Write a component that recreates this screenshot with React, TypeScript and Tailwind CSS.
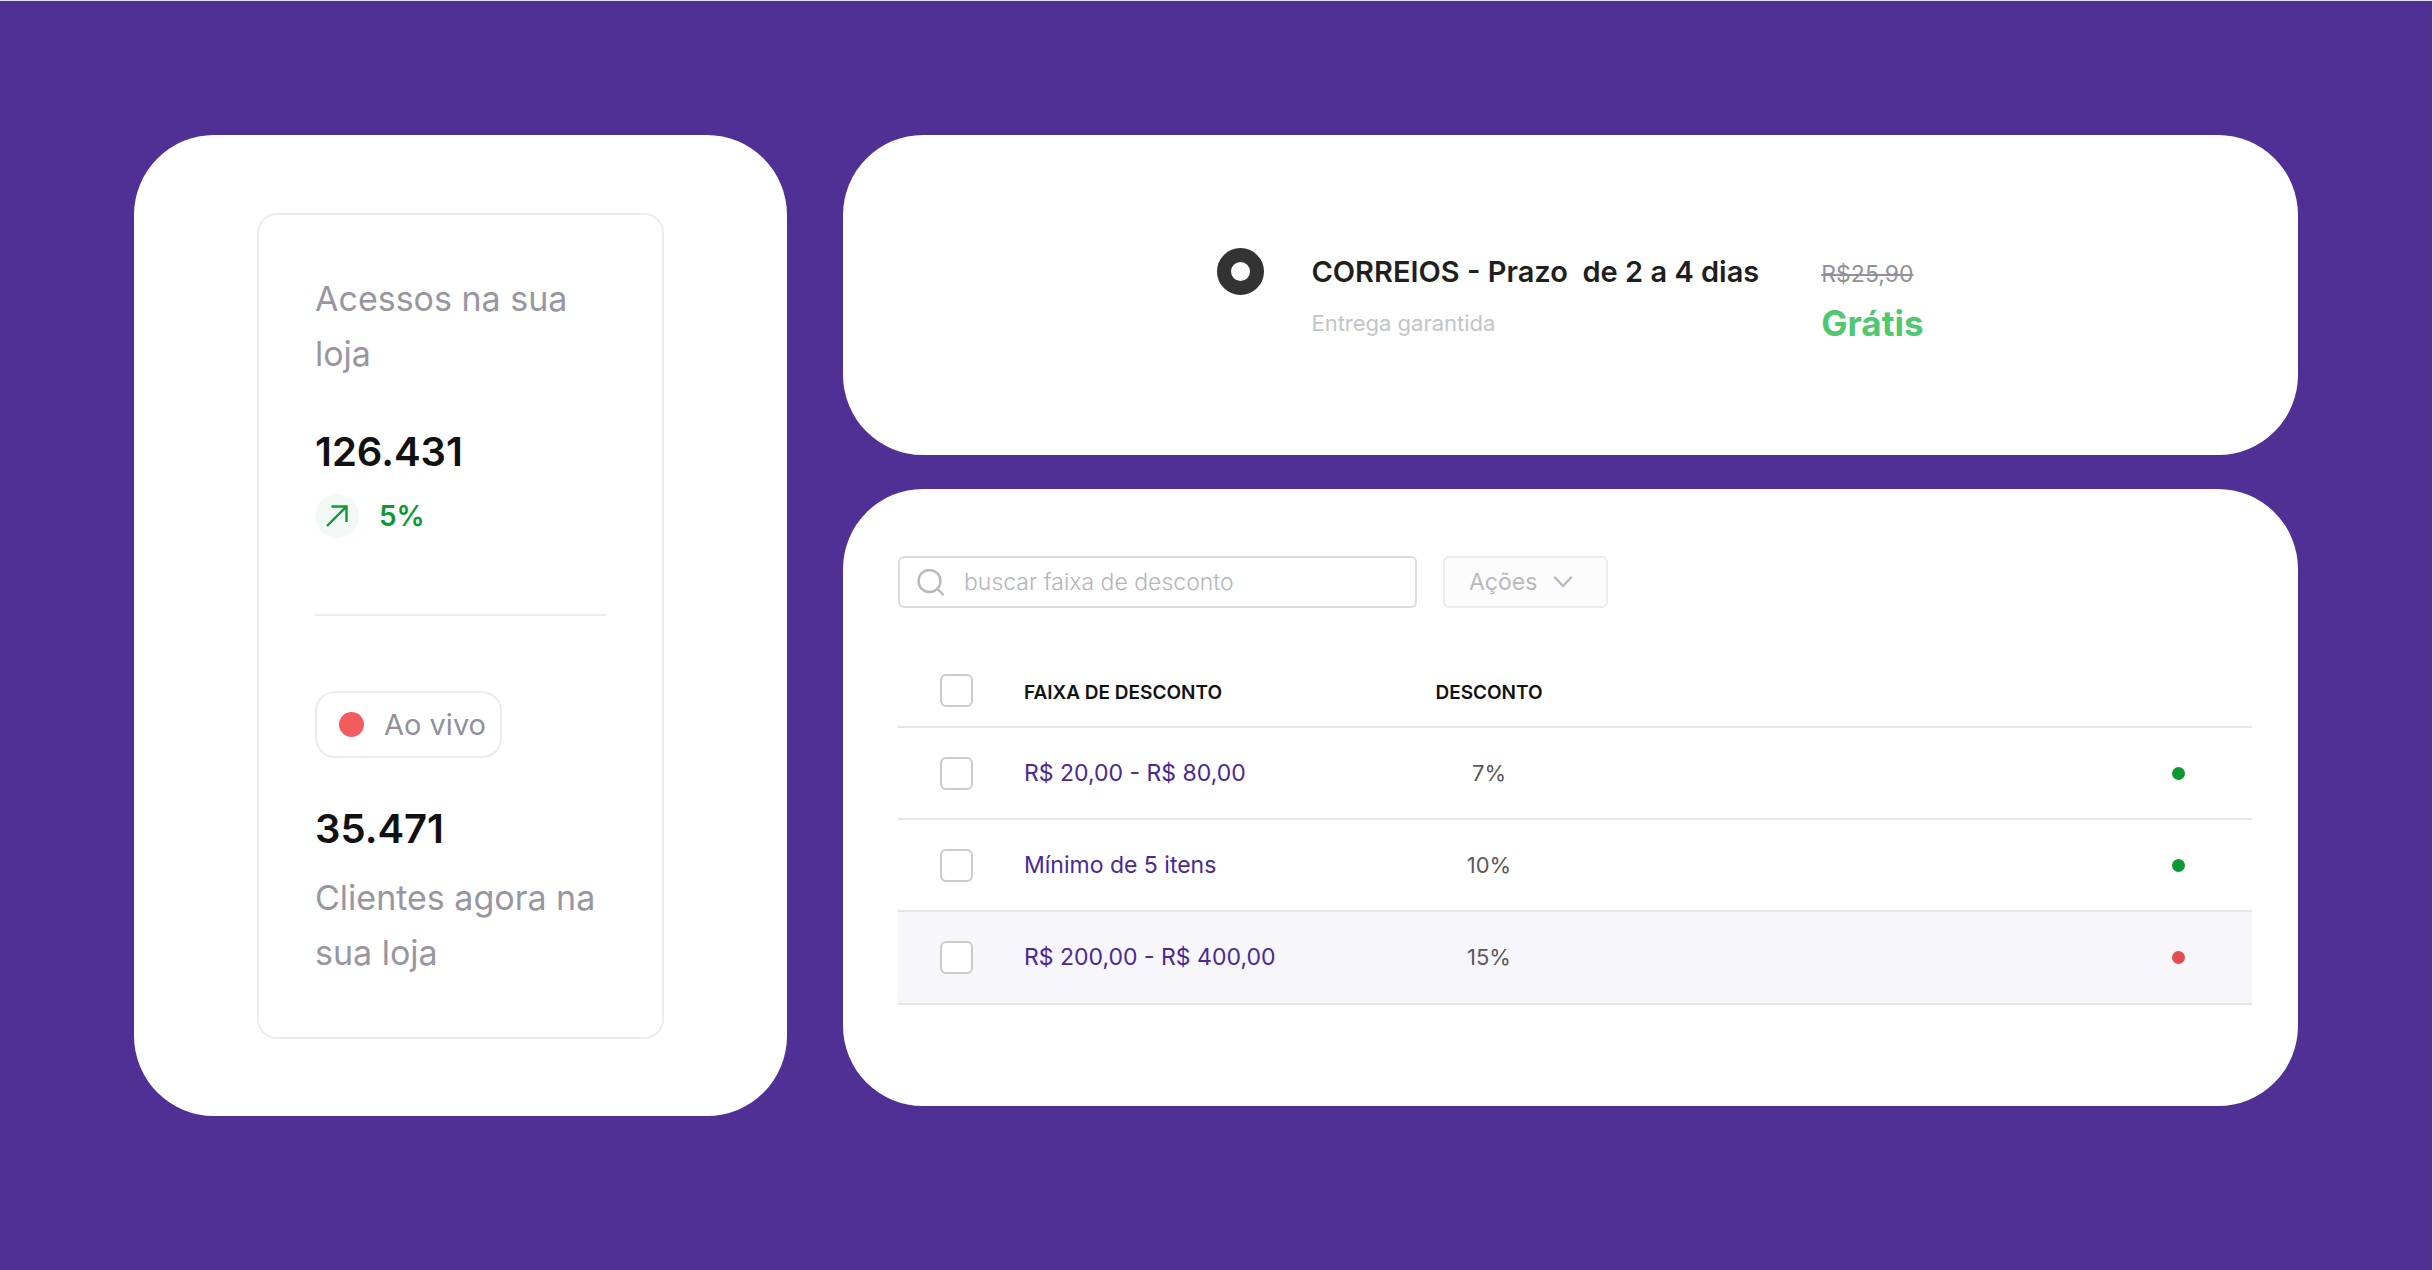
import { useState } from "react";

type Discount = {
  id: string;
  range: string;
  percent: string;
  active: boolean;
};

const DISCOUNTS: Discount[] = [
  { id: "a", range: "R$ 20,00 - R$ 80,00", percent: "7%", active: true },
  { id: "b", range: "Mínimo de 5 itens", percent: "10%", active: true },
  { id: "c", range: "R$ 200,00 - R$ 400,00", percent: "15%", active: false },
];

const CHECKBOX =
  "block h-[33px] w-[33px] appearance-none rounded-md border-2 border-[#cbcacf] bg-white checked:bg-[#513095]";

function StatsCard() {
  return (
    <section className="flex justify-center rounded-[80px] bg-white px-12 pt-[78px] pb-[77px]">
      <div className="w-[407px] rounded-[20px] border-2 border-[#ececec] px-14 pt-14 pb-[57px]">
        <p className="text-[34px] leading-[55px] text-[#9896a1]">
          Acessos na sua loja
        </p>
        <p className="mt-[47px] text-[40px] leading-[48px] font-semibold text-[#111112]">
          126.431
        </p>
        <div className="mt-[18px] flex items-center gap-5">
          <span className="flex h-[44px] w-[44px] items-center justify-center rounded-full bg-[#f3faf6]">
            <svg
              viewBox="0 0 24 24"
              className="h-6 w-6"
              fill="none"
              stroke="#0b9a30"
              strokeWidth="2.4"
              aria-hidden="true"
            >
              <path d="M2 22 21 3M6.500 2.500h15v15.500" />
            </svg>
          </span>
          <span className="text-[28px] leading-9 font-semibold text-[#0b9a30]">
            5%
          </span>
        </div>

        <hr className="mt-[76px] border-t-2 border-[#ececec]" />

        <div className="mt-[75px] flex h-[67px] w-[187px] items-center gap-5 rounded-[20px] border-2 border-[#ececec] pl-[22px]">
          <span className="h-[25px] w-[25px] shrink-0 rounded-full bg-[#f35c5f]" />
          <span className="text-[29px] leading-9 whitespace-nowrap text-[#91909b]">
            Ao vivo
          </span>
        </div>
        <p className="mt-[47px] text-[40px] leading-[48px] font-semibold text-[#111112]">
          35.471
        </p>
        <p className="mt-[17px] text-[34px] leading-[55px] text-[#9896a1]">
          Clientes agora na sua loja
        </p>
      </div>
    </section>
  );
}

function ShippingCard() {
  return (
    <section className="flex h-80 items-start justify-center rounded-[80px] bg-white pt-[113px]">
      <input
        type="radio"
        id="correios"
        name="shipping"
        defaultChecked
        className="h-[47px] w-[47px] shrink-0 appearance-none rounded-full border-[14px] border-[#333333] bg-white"
      />
      <div className="ml-[47px]">
        <label
          htmlFor="correios"
          className="block text-[29px] leading-[47px] font-semibold whitespace-pre text-[#1f1f21]"
        >
          {"CORREIOS - Prazo  de 2 a 4 dias"}
        </label>
        <p className="mt-3 text-[22px] leading-8 text-[#c3c3c9]">
          Entrega garantida
        </p>
      </div>
      <div className="ml-[62px]">
        <s className="block text-[23px] leading-[52px] text-[#91909b]">
          R$25,90
        </s>
        <p className="text-[35px] leading-[46px] font-bold text-[#50c872]">
          Grátis
        </p>
      </div>
    </section>
  );
}

function DiscountsCard() {
  const [query, setQuery] = useState("");

  return (
    <section className="rounded-[80px] bg-white pt-[67px] pr-[46px] pb-[101px] pl-[55px]">
      <div className="flex gap-[26px]">
        <label className="flex h-[52px] w-[519px] items-center gap-5 rounded-md border-2 border-[#dcdce0] pl-[17px]">
          <svg
            viewBox="0 0 27 27"
            className="h-[27px] w-[27px] shrink-0"
            fill="none"
            stroke="#b9b8c0"
            strokeWidth="2.4"
            strokeLinecap="round"
            aria-hidden="true"
          >
            <circle cx="12.500" cy="12" r="11" />
            <path d="m20.500 20 5.500 5.500" />
          </svg>
          <input
            type="text"
            aria-label="buscar faixa de desconto"
            placeholder="buscar faixa de desconto"
            value={query}
            onChange={(e) => setQuery(e.target.value)}
            className="min-w-0 flex-1 text-[23px] font-light text-[#333333] outline-none placeholder:text-[#b5b5bd]"
          />
        </label>
        <button
          type="button"
          className="flex h-[52px] w-[165px] items-center gap-4 rounded-md border-2 border-[#ececec] bg-[#fcfcfc] pl-6 text-[23px] text-[#b9b8c0]"
        >
          Ações
          <svg
            viewBox="0 0 20 12"
            className="h-3 w-5"
            fill="none"
            stroke="currentColor"
            strokeWidth="2.4"
            strokeLinecap="round"
            strokeLinejoin="round"
            aria-hidden="true"
          >
            <path d="m2 1.500 8 8.500 8-8.500" />
          </svg>
        </button>
      </div>

      <table className="mt-[46px] w-full table-fixed">
        <thead>
          <tr className="h-[73px] border-b-2 border-[#e6e6e8] text-[19px] text-[#111112]">
            <th className="w-[126px] pl-[42px]">
              <input
                type="checkbox"
                aria-label="Selecionar todas"
                className={CHECKBOX}
              />
            </th>
            <th className="w-[408px] pt-1.5 text-left font-semibold">
              FAIXA DE DESCONTO
            </th>
            <th className="w-[114px] pt-1.5 font-semibold">DESCONTO</th>
            <th aria-label="Status" />
          </tr>
        </thead>
        <tbody>
          {DISCOUNTS.map((d) => (
            <tr
              key={d.id}
              className={
                d.active
                  ? "h-[92px] border-b-2 border-[#e6e6e8]"
                  : "h-[93px] border-b-2 border-[#e6e6e8] bg-[#f7f6fb]"
              }
            >
              <td className="pl-[42px]">
                <input
                  type="checkbox"
                  aria-label={d.range}
                  className={CHECKBOX}
                />
              </td>
              <td className="text-[23px] text-[#4a2896]">{d.range}</td>
              <td className="text-center text-[22px] text-[#59595c]">
                {d.percent}
              </td>
              <td className="pr-[67px]">
                <span
                  className={
                    d.active
                      ? "ml-auto block h-[13px] w-[13px] rounded-full bg-[#0b9a30]"
                      : "ml-auto block h-[13px] w-[13px] rounded-full bg-[#e54d4e]"
                  }
                />
              </td>
            </tr>
          ))}
        </tbody>
      </table>
    </section>
  );
}

export default function App() {
  return (
    <main className="min-h-screen border-t border-r border-[#e3dfee] bg-[#513095] px-[134px] pt-[134px] pb-20 font-['Inter',sans-serif]">
      <div className="grid grid-cols-[653fr_1455fr] items-start gap-14">
        <StatsCard />
        <div className="flex flex-col gap-[34px]">
          <ShippingCard />
          <DiscountsCard />
        </div>
      </div>
    </main>
  );
}
